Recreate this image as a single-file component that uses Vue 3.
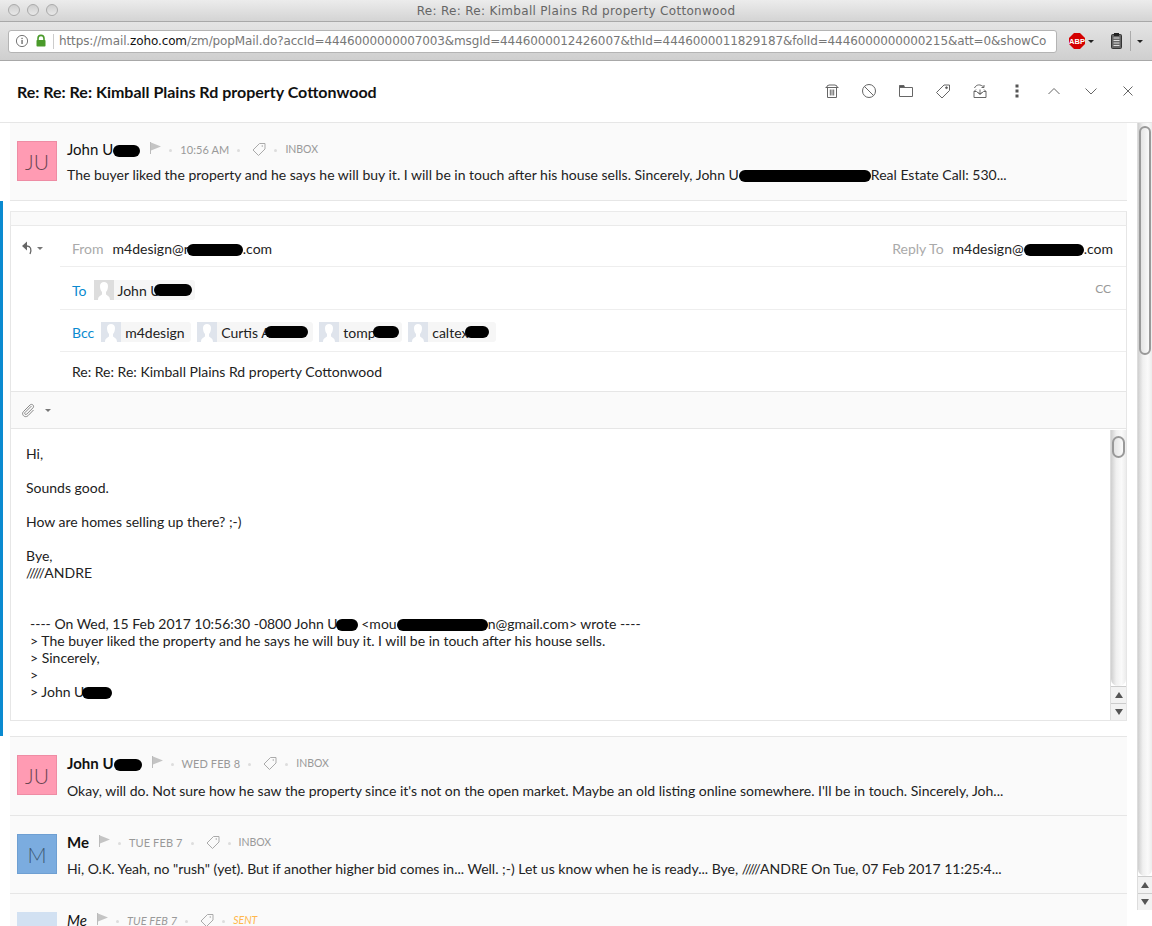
<template>
  <div class="window">
    <!-- browser chrome -->
    <div class="titlebar">
      <div class="lights"><i></i><i></i><i></i></div>
      <div class="win-title">Re: Re: Re: Kimball Plains Rd property Cottonwood</div>
    </div>
    <div class="toolbar">
      <div class="urlbar">
        <svg class="info" width="14" height="14" viewBox="0 0 14 14"><circle cx="7" cy="7" r="5.6" fill="#fff" stroke="#777" stroke-width="1"/><rect x="6.4" y="6" width="1.3" height="4" fill="#666"/><rect x="6.4" y="3.8" width="1.3" height="1.3" fill="#666"/></svg>
        <svg class="lock" width="12" height="14" viewBox="0 0 12 14"><path d="M3 6V4.400a3 3 0 0 1 6 0V6" fill="none" stroke="#4a9a2a" stroke-width="1.6"/><rect x="1.5" y="6" width="9" height="6.5" rx="0.8" fill="#4a9a2a"/></svg>
        <span class="url-sep"></span>
        <span class="url">https://mail.<b>zoho.com</b>/zm/popMail.do?accId=4446000000007003&amp;msgId=4446000012426007&amp;thId=4446000011829187&amp;folId=4446000000000215&amp;att=0&amp;showCo</span>
      </div>
      <div class="addons">
        <svg width="16" height="16" viewBox="0 0 16 16"><polygon points="5,0 11,0 16,5 16,11 11,16 5,16 0,11 0,5" fill="#d40000"/><text x="8" y="10.800" text-anchor="middle" font-size="7.500" font-weight="700" font-family="Liberation Sans, sans-serif" fill="#fff">ABP</text></svg>
        <span class="caret dark abp-caret"></span>
        <svg class="clip" width="11" height="16" viewBox="0 0 11 16"><rect x="0.5" y="1.5" width="10" height="14" rx="1" fill="#666" stroke="#333"/><rect x="3" y="0" width="5" height="3" fill="#222"/><path d="M2.500 5h6M2.500 7.500h6M2.500 10h6M2.500 12.500h6" stroke="#ddd"/></svg>
        <span class="addon-sep"></span>
        <span class="caret dark"></span>
      </div>
    </div>

    <!-- mail header -->
    <header class="mail-head">
      <h1>Re: Re: Re: Kimball Plains Rd property Cottonwood</h1>
      <div class="actions">
        <svg width="16" height="16" viewBox="0 0 16 16"><path d="M1.500 4.500h13M3 4.500V3l2-1h6l2 1v1.500M3.500 4.500V14.500h9V4.500M6.300 6.500v6M8 6.500v6M9.700 6.500v6"/></svg>
        <svg width="16" height="16" viewBox="0 0 16 16"><circle cx="8" cy="8" r="6.500"/><path d="M3.500 3.500l9 9"/></svg>
        <svg width="16" height="16" viewBox="0 0 16 16"><path d="M1.500 3v10.500h13V4.500H6V3z"/><path d="M1.500 2.500H6v2H1.500z" fill="#555"/></svg>
        <svg width="16" height="16" viewBox="0 0 16 16"><path d="M1.500 9.500L9 2h5.500v5.500L7 15z"/><circle cx="11.500" cy="4.700" r="0.900" fill="#555"/></svg>
        <svg width="16" height="16" viewBox="0 0 16 16"><path d="M2 8.500v6h12v-6l-2-2M2 8.500l2-2M2 8.500h2.500L8 11.500l3.500-3H14M8 11V6.500M6.500 9.500L8 11l1.500-1.500M2.500 5C4 1.500 8.500 .5 12 4.500M12 2v2.500H9.500"/></svg>
        <svg class="more" width="16" height="16" viewBox="0 0 16 16"><rect x="6.500" y="1.500" width="3" height="3"/><rect x="6.500" y="6.500" width="3" height="3"/><rect x="6.500" y="11.500" width="3" height="3"/></svg>
        <svg width="16" height="16" viewBox="0 0 16 16"><path d="M2.500 11L8 5.500l5.500 5.500"/></svg>
        <svg width="16" height="16" viewBox="0 0 16 16"><path d="M2.500 5.500L8 11l5.500-5.500"/></svg>
        <svg width="16" height="16" viewBox="0 0 16 16"><path d="M3.500 3.500l9 9M12.500 3.500l-9 9"/></svg>
      </div>
    </header>

    <div class="body">
      <div class="thread">
        <!-- first collapsed message -->
        <article class="msg first">
          <div class="avatar pink">JU</div>
          <div class="msg-main">
            <div class="meta">
              <span class="sender normal">John U<i class="blot" style="width:27px"></i></span>
              <svg class="flag" width="11" height="12" viewBox="0 0 11 12"><path d="M0.500 0v12" stroke="#bbb"/><path d="M1 0.500l10 4-10 4z" fill="#c4c4c4"/></svg>
              <i class="dot"></i><span class="when">10:56 AM</span><i class="dot"></i>
              <svg class="tag" width="14" height="14" viewBox="0 0 14 14"><path d="M1 8l6.500-6.500H13V7l-6.500 6.500z" fill="none" stroke="#aaa"/><circle cx="10.300" cy="4" r="0.800" fill="#aaa"/></svg>
              <i class="dot"></i><span class="folder">INBOX</span>
            </div>
            <div class="preview">The buyer liked the property and he says he will buy it. I will be in touch after his house sells. Sincerely, John U<i class="blot" style="width:132px"></i>Real Estate Call: 530...</div>
          </div>
        </article>

        <!-- open message being replied to -->
        <section class="open">
          <div class="open-strip"></div>
          <div class="compose">
            <div class="reply-col">
              <svg width="14" height="15" viewBox="0 0 14 15"><path d="M1 5L6 .5v9z" fill="#666"/><path d="M6 5c3.500 0 5 3 3 8" fill="none" stroke="#666" stroke-width="1.300"/></svg>
              <span class="caret"></span>
            </div>
            <div class="fields">
              <div class="field from-row">
                <span class="lbl grey from-lbl">From</span>
                <span class="addr">m4design@r<i class="blot" style="width:56px;margin-left:-2px"></i>.com</span>
                <span class="reply-to">
                  <span class="lbl grey">Reply To</span>
                  <span class="addr">m4design@<i class="blot" style="width:60px"></i>.com</span>
                </span>
              </div>
              <div class="field to-row">
                <span class="lbl blue">To</span>
                <div class="chip to-chip"><svg class="chip-pic" viewBox="0 0 20 20"><use href="#person"/></svg>John U<i class="blot" style="width:38px;margin-left:-7px"></i></div>
                <span class="cc">CC</span>
              </div>
              <div class="field bcc-row">
                <span class="lbl blue">Bcc</span>
                <div v-for="c in bcc" :key="c.name" class="chip" :style="{ width: c.w + 'px' }">
                  <svg class="chip-pic cool" viewBox="0 0 20 20"><use href="#person"/></svg>{{ c.name }}<i v-if="c.blot" class="blot" :style="{ width: c.blot + 'px', marginLeft: c.over + 'px' }"></i>
                </div>
              </div>
              <div class="field subject">Re: Re: Re: Kimball Plains Rd property Cottonwood</div>
            </div>
          </div>

          <div class="attach-bar">
            <svg width="15" height="15" viewBox="0 0 15 15"><path d="M10.500 3L4 9.500c-1 1.200 .5 2.700 1.700 1.700L12 4.800c1.800-2-1-4.600-3-2.800L2.500 8.500c-2.800 3 1.500 7 4.500 4.200L12.500 7" fill="none" stroke="#888" stroke-width="1"/></svg>
            <span class="caret"></span>
          </div>

          <div class="editor">
            <div class="editor-text">
              <div>Hi,</div>
              <div class="gap"></div>
              <div>Sounds good.</div>
              <div class="gap"></div>
              <div>How are homes selling up there? ;-)</div>
              <div class="gap"></div>
              <div>Bye,</div>
              <div>/////ANDRE</div>
              <div class="gap"></div>
              <div class="gap"></div>
              <div class="quote">
                <div>---- On Wed, 15 Feb 2017 10:56:30 -0800 John U<i class="blot" style="width:22px;margin-left:-2px"></i> &lt;mou<i class="blot" style="width:91px"></i>n@gmail.com&gt; wrote ----</div>
                <div>&gt; The buyer liked the property and he says he will buy it. I will be in touch after his house sells.</div>
                <div>&gt; Sincerely,</div>
                <div>&gt;</div>
                <div>&gt; John U<i class="blot" style="width:30px;margin-left:-2px"></i></div>
              </div>
            </div>
            <div class="sbar inner">
              <div class="sbar-track"><div class="sbar-thumb"></div></div>
              <div class="sbar-btn"><i class="up"></i></div>
              <div class="sbar-btn"><i class="down"></i></div>
            </div>
          </div>
        </section>

        <!-- rest of the conversation -->
        <article v-for="m in rest" :key="m.id" class="msg" :class="m.cls">
          <div class="avatar" :class="m.color">{{ m.initials }}</div>
          <div class="msg-main">
            <div class="meta">
              <span class="sender">{{ m.name }}<i v-if="m.blot" class="blot" :style="{ width: m.blot + 'px' }"></i></span>
              <svg class="flag" width="11" height="12" viewBox="0 0 11 12"><path d="M0.500 0v12" stroke="#bbb"/><path d="M1 0.500l10 4-10 4z" fill="#c4c4c4"/></svg>
              <i class="dot"></i><span class="when">{{ m.when }}</span><i class="dot"></i>
              <svg class="tag" width="14" height="14" viewBox="0 0 14 14"><path d="M1 8l6.500-6.500H13V7l-6.500 6.500z" fill="none" stroke="#aaa"/><circle cx="10.300" cy="4" r="0.800" fill="#aaa"/></svg>
              <i class="dot"></i><span class="folder" :class="{ sent: m.folder === 'SENT' }">{{ m.folder }}</span>
            </div>
            <div class="preview">{{ m.text }}</div>
          </div>
        </article>
      </div>

      <div class="sbar outer">
        <div class="sbar-track"><div class="sbar-thumb"></div></div>
        <div class="sbar-btn"><i class="up"></i></div>
        <div class="sbar-btn"><i class="down"></i></div>
      </div>
    </div>

    <svg width="0" height="0" class="defs">
      <symbol id="person" viewBox="0 0 20 20"><path d="M4 20c0-4 3-4.500 4-5.500V12C6.500 10.500 6 8 6 6c0-2.500 1.800-4 4-4s4 1.500 4 4c0 2-.5 4.500-2 6v2.500c1 1 4 1.500 4 5.500z" fill="#fff"/></symbol>
    </svg>
  </div>
</template>

<script setup>
const bcc = [
  { name: 'm4design', w: 90, blot: 0, over: 0 },
  { name: 'Curtis A', w: 116, blot: 43, over: -6 },
  { name: 'tomp', w: 83, blot: 27, over: -3 },
  { name: 'caltex', w: 88, blot: 24, over: -3 },
]

const rest = [
  {
    id: 1,
    initials: 'JU',
    color: 'pink',
    cls: 'after-open',
    name: 'John U',
    blot: 28,
    when: 'WED FEB 8',
    folder: 'INBOX',
    text: "Okay, will do. Not sure how he saw the property since it's not on the open market. Maybe an old listing online somewhere. I'll be in touch. Sincerely, Joh...",
  },
  {
    id: 2,
    initials: 'M',
    color: 'blue-av',
    name: 'Me',
    when: 'TUE FEB 7',
    folder: 'INBOX',
    text: 'Hi, O.K. Yeah, no "rush" (yet). But if another higher bid comes in... Well. ;-) Let us know when he is ready... Bye, /////ANDRE On Tue, 07 Feb 2017 11:25:4...',
  },
  {
    id: 3,
    initials: '',
    color: 'pale',
    cls: 'italic',
    name: 'Me',
    when: 'TUE FEB 7',
    folder: 'SENT',
    text: '',
  },
]
</script>

<style>
html, body { margin: 0; background: #fff; overflow: hidden; }
</style>

<style scoped>
.window {
  width: 1152px;
  height: 926px;
  display: flex;
  flex-direction: column;
  overflow: hidden;
  background: #fff;
  font-family: Lato, "Open Sans", sans-serif;
  color: #222;
}
.defs { position: absolute; }

/* chrome */
.titlebar {
  height: 21px;
  flex: none;
  position: relative;
  display: flex;
  align-items: center;
  justify-content: center;
  background: linear-gradient(#ececec, #d4d4d4);
  border-bottom: 1px solid #a8a8a8;
}
.lights { position: absolute; left: 8px; top: 4px; display: flex; gap: 7px; }
.lights i {
  width: 12px;
  height: 12px;
  border-radius: 50%;
  background: linear-gradient(#cfcfcf, #e8e8e8);
  border: 1px solid #aaa;
  box-sizing: border-box;
}
.win-title { font: 12px "DejaVu Sans", sans-serif; letter-spacing: 0.31px; color: #666; }
.toolbar {
  height: 39px;
  flex: none;
  display: flex;
  align-items: center;
  padding-left: 8px;
  box-sizing: border-box;
  background: linear-gradient(#e4e4e4, #cfcfcf);
  border-bottom: 1px solid #a8a8a8;
}
.urlbar {
  width: 1049px;
  height: 23px;
  flex: none;
  box-sizing: border-box;
  display: flex;
  align-items: center;
  background: #fff;
  border: 1px solid #b4b4b4;
  border-radius: 3px;
  padding-left: 6px;
  overflow: hidden;
}
.urlbar svg { flex: none; }
.lock { margin-left: 6px; }
.url-sep { width: 1px; height: 15px; background: #ccc; margin: 0 5px 0 6px; flex: none; }
.url { font: 12px "DejaVu Sans", sans-serif; color: #777; white-space: nowrap; letter-spacing: -0.115px; }
.url b { font-weight: 400; color: #111; }
.addons { display: flex; align-items: center; margin-left: 12px; }
.abp-caret { margin: 0 17px 0 3px; }
.addon-sep { width: 1px; height: 20px; background: #aaa; margin: 0 6px 0 7px; }
.clip { margin-right: 1px; }
.caret {
  display: inline-block;
  width: 0;
  height: 0;
  border-left: 3px solid transparent;
  border-right: 3px solid transparent;
  border-top: 3px solid #777;
}
.caret.dark { border-top-color: #222; }

/* mail header */
.mail-head {
  height: 62px;
  flex: none;
  box-sizing: border-box;
  display: flex;
  align-items: center;
  justify-content: space-between;
  padding: 0 16px 1px 17px;
  border-bottom: 1px solid #e6e6e6;
}
.mail-head h1 { font-size: 16px; font-weight: 700; margin: 0; color: #111; }
.actions { display: flex; gap: 21px; }
.actions svg { fill: none; stroke: #666; stroke-width: 1; }
.actions .more { fill: #555; stroke: none; }

/* thread */
.body { flex: 1; display: flex; min-height: 0; }
.thread { width: 1127px; flex: none; overflow: hidden; }
.msg {
  margin-left: 10px;
  height: 78px;
  box-sizing: border-box;
  display: flex;
  padding: 18px 0 0 7px;
  background: #fafafa;
  border-bottom: 1px solid #e6e6e6;
}
.msg.after-open { height: 80px; border-top: 1px solid #e6e6e6; }
.avatar {
  width: 40px;
  height: 40px;
  box-sizing: border-box;
  flex: none;
  display: flex;
  align-items: center;
  justify-content: center;
  font-size: 21px;
  font-weight: 300;
  border: 1px solid;
}
.pink { background: #ff9bb3; border-color: #ee8ca4; color: #6b4654; }
.blue-av { background: #7bacdf; border-color: #6e9fd2; color: #3b5872; }
.pale { background: #d2e1f2; border-color: #d2e1f2; }
.msg-main { margin-left: 10px; min-width: 0; }
.meta { display: flex; align-items: center; height: 20px; margin-top: -2px; }
.sender { font-size: 15px; font-weight: 700; color: #111; }
.sender.normal { font-weight: 400; }
.italic .sender { font-weight: 400; }
.italic .sender, .italic .when, .italic .folder { font-style: italic; }
.flag { margin-left: 10px; margin-top: -3px; }
.dot { width: 3px; height: 3px; border-radius: 50%; background: #ddd; margin: 2px 8px 0; }
.when { font-size: 11px; color: #999; letter-spacing: 0.1px; }
.tag { margin: 0 0 0 4px; }
.folder { font-size: 10.500px; color: #999; }
.folder.sent { color: #ffb84d; }
.preview { font-size: 14px; line-height: 20px; margin-top: 7px; color: #222; white-space: nowrap; }
.first .preview { margin-top: 6px; }
.after-open .preview { margin-top: 8px; }
.blot {
  display: inline-block;
  height: 12px;
  background: #000;
  border-radius: 6px;
  vertical-align: -2px;
}

/* open message */
.open { border-left: 3px solid #0a8ad0; padding: 10px 0 15px 7px; }
.open-strip { height: 13px; background: #fafafa; border: 1px solid #eaeaea; border-right: 1px solid #e6e6e6; }
.compose { display: flex; border-left: 1px solid #e6e6e6; border-right: 1px solid #e6e6e6; }
.reply-col { width: 49px; flex: none; padding: 15px 0 0 10px; box-sizing: border-box; display: flex; align-items: flex-start; gap: 2px; }
.reply-col .caret { margin-top: 6px; }
.fields { flex: 1; min-width: 0; }
.field {
  display: flex;
  align-items: center;
  padding-left: 12px;
  border-bottom: 1px solid #eee;
  font-size: 14px;
}
.from-row { height: 35px; padding-top: 5px; }
.to-row { height: 38px; padding-top: 4px; }
.bcc-row { height: 38px; padding-top: 3px; }
.subject { height: 39px; color: #222; border-bottom: none; }
.lbl { font-size: 14px; }
.grey { color: #aaa; }
.blue { color: #0a8ad0; }
.from-lbl { margin-right: 9px; }
.addr { color: #222; }
.reply-to { margin-left: auto; margin-right: 13px; }
.reply-to .addr { margin-left: 9px; }
.cc { margin-left: auto; margin-right: 15px; font-size: 12px; color: #999; margin-top: -3px; }
.chip {
  display: flex;
  align-items: center;
  box-sizing: border-box;
  height: 20px;
  margin-left: 6px;
  padding-right: 3px;
  background: #f6f6f6;
  border-radius: 3px;
  font-size: 14px;
  white-space: nowrap;
}
.lbl + .chip { margin-left: 7px; }
.chip-pic { width: 20px; height: 20px; margin-right: 4px; background: #ddd; flex: none; }
.chip-pic.cool { background: #dfe4ec; }
.attach-bar {
  height: 38px;
  box-sizing: border-box;
  display: flex;
  align-items: center;
  gap: 9px;
  padding: 1px 0 0 10px;
  background: #fafafa;
  border: 1px solid #e6e6e6;
}
.editor {
  height: 292px;
  box-sizing: border-box;
  display: flex;
  border: 1px solid #e6e6e6;
  border-top: none;
  overflow: hidden;
}
.editor-text { flex: 1; padding: 16px 0 0 15px; font-size: 14px; line-height: 17px; color: #222; white-space: nowrap; }
.gap { height: 17px; }
.quote { padding-left: 4px; }

/* aqua scrollbars */
.sbar { width: 15px; flex: none; display: flex; flex-direction: column; background: #fff; }
.sbar.inner { border-left: 1px solid #ddd; margin-top: 1px; }
.sbar.outer { margin-left: 10px; height: 787px; border-left: 1px solid #ddd; box-sizing: border-box; }
.sbar-track {
  flex: 1;
  padding-top: 6px;
  background: linear-gradient(90deg, #cfcfcf, #f0f0f0 35%, #fafafa 70%, #ececec);
  border-radius: 0 0 7px 7px;
}
.sbar-thumb {
  height: 22px;
  margin: 0 1px;
  border: 2px solid #999;
  border-radius: 7px;
  box-sizing: border-box;
  background: linear-gradient(90deg, #e4e4e4, #fafafa);
}
.outer .sbar-track { padding-top: 3px; }
.outer .sbar-thumb { height: 229px; }
.sbar-btn {
  height: 16px;
  flex: none;
  display: flex;
  align-items: center;
  justify-content: center;
  border-top: 1px solid #ccc;
  background: #f2f2f2;
}
.sbar-btn i { width: 0; height: 0; border-left: 4px solid transparent; border-right: 4px solid transparent; }
.sbar-btn .up { border-bottom: 6px solid #555; }
.sbar-btn .down { border-top: 6px solid #555; }
</style>
